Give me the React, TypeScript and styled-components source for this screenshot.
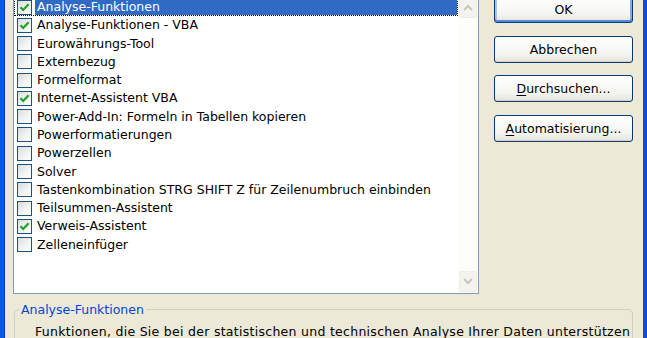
import React from 'react';
import styled, { createGlobalStyle } from 'styled-components';

const GlobalStyle = createGlobalStyle`
  html, body {
    margin: 0;
    padding: 0;
    background: #ece9d8;
  }
  body {
    font-family: "DejaVu Sans", Tahoma, sans-serif;
    font-size: 12.5px;
  }
`;

interface Item {
  label: string;
  checked: boolean;
}

const items: Item[] = [
  { label: 'Analyse-Funktionen', checked: true },
  { label: 'Analyse-Funktionen - VBA', checked: true },
  { label: 'Eurowährungs-Tool', checked: false },
  { label: 'Externbezug', checked: false },
  { label: 'Formelformat', checked: false },
  { label: 'Internet-Assistent VBA', checked: true },
  { label: 'Power-Add-In: Formeln in Tabellen kopieren', checked: false },
  { label: 'Powerformatierungen', checked: false },
  { label: 'Powerzellen', checked: false },
  { label: 'Solver', checked: false },
  { label: 'Tastenkombination STRG SHIFT Z für Zeilenumbruch einbinden', checked: false },
  { label: 'Teilsummen-Assistent', checked: false },
  { label: 'Verweis-Assistent', checked: true },
  { label: 'Zelleneinfüger', checked: false },
];

const Frame = styled.div`
  width: 647px;
  height: 338px;
  box-sizing: border-box;
  overflow: hidden;
  background: #ece9d8;
  border-left: 4px solid #0a56e8;
  border-right: 4px solid #0a4fd8;
  box-shadow: inset 1px 0 0 #0b3fc0;
`;

const Content = styled.div`
  margin-top: -5px;
  padding: 0 10px 0 9px;
  display: flex;
  flex-direction: column;
`;

const TopArea = styled.div`
  display: flex;
  gap: 15px;
`;

const ListBox = styled.div`
  width: 466px;
  height: 299px;
  box-sizing: border-box;
  border: 1px solid #7f9db9;
  background: #ffffff;
  display: flex;
`;

const Rows = styled.div`
  flex: 1;
  padding-top: 2px;
  display: flex;
  flex-direction: column;
`;

const Row = styled.div<{ $focused?: boolean }>`
  height: 18.28px;
  display: flex;
  align-items: center;
  padding: 0 1px 0 3px;
  box-sizing: border-box;
  outline: ${(p) => (p.$focused ? '1px dotted #000' : 'none')};
  outline-offset: -1px;
`;

const Box = styled.span`
  width: 15px;
  height: 15px;
  flex: none;
  box-sizing: border-box;
  border: 1px solid #1c5180;
  background: linear-gradient(135deg, #dcdcd7 0%, #f2f2ef 55%, #ffffff 100%);
  display: flex;
  align-items: center;
  justify-content: center;
`;

const Label = styled.span<{ $selected?: boolean }>`
  flex: 1;
  margin-left: 3px;
  padding: 0 2px;
  height: 16px;
  line-height: 16px;
  white-space: nowrap;
  color: ${(p) => (p.$selected ? '#ffffff' : '#000000')};
  background: ${(p) => (p.$selected ? '#316ac5' : 'transparent')};
`;

const ScrollBar = styled.div`
  width: 20px;
  flex: none;
  background: #fdfdfa;
  display: flex;
  flex-direction: column;
  justify-content: space-between;
  padding: 1px 0;
  box-sizing: border-box;
`;

const ScrollButton = styled.div`
  height: 19px;
  margin: 0 1px;
  border-radius: 2px;
  border: 1px solid #eeede5;
  background: #f4f3ee;
  display: flex;
  align-items: center;
  justify-content: center;
`;

const Buttons = styled.div`
  width: 139px;
  margin-top: 1px;
  display: flex;
  flex-direction: column;
  gap: 12.5px;
`;

const Button = styled.button<{ $default?: boolean }>`
  height: 27px;
  width: 100%;
  box-sizing: border-box;
  border: 1px solid #003c74;
  border-radius: 3px;
  background: linear-gradient(180deg, #ffffff 0%, #f4f4f0 70%, #e3e2da 100%);
  font-family: "DejaVu Sans", Tahoma, sans-serif;
  font-size: 12.5px;
  font-weight: 400;
  color: #000;
  padding: 0;
  box-shadow: ${(p) =>
    p.$default
      ? 'inset 0 -2px 0 #5a86e0, inset 2px 0 0 #a9c1f0, inset -2px 0 0 #89a9ec, inset 0 2px 0 #cfdcf7'
      : 'inset 0 -1px 0 #d6d0c5'};

  u {
    text-decoration: underline;
    text-underline-offset: 2px;
  }
`;

const Group = styled.fieldset`
  margin: 8px 0 0 1px;
  padding: 7px 20px 12px 20px;
  border: 1px solid #d0d0bf;
  border-radius: 5px;
  min-width: 0;
`;

const Legend = styled.legend`
  color: #0046d5;
  padding: 0 2px;
  margin-left: -16px;
  line-height: 15px;
`;

const Description = styled.div`
  white-space: nowrap;
  color: #000;
  line-height: 15px;
  letter-spacing: 0.28px;
`;

const Check = () => (
  <svg width="11" height="11" viewBox="0 0 11 11">
    <path d="M1.5 5.2 L4.2 8 L9.6 2.2" fill="none" stroke="#21a121" strokeWidth="2.2" />
  </svg>
);

const Chevron = ({ up }: { up?: boolean }) => (
  <svg width="10" height="7" viewBox="0 0 10 7">
    <path
      d={up ? 'M1 6 L5 2 L9 6' : 'M1 1 L5 5 L9 1'}
      fill="none"
      stroke="#c9c7ba"
      strokeWidth="2"
    />
  </svg>
);

export default function App() {
  return (
    <>
      <GlobalStyle />
      <Frame>
        <Content>
          <TopArea>
            <ListBox>
              <Rows>
                {items.map((item, i) => (
                  <Row key={item.label} $focused={i === 0}>
                    <Box>{item.checked && <Check />}</Box>
                    <Label $selected={i === 0}>{item.label}</Label>
                  </Row>
                ))}
              </Rows>
              <ScrollBar>
                <ScrollButton>
                  <Chevron up />
                </ScrollButton>
                <ScrollButton>
                  <Chevron />
                </ScrollButton>
              </ScrollBar>
            </ListBox>
            <Buttons>
              <Button $default>OK</Button>
              <Button>Abbrechen</Button>
              <Button>
                <u>D</u>urchsuchen...
              </Button>
              <Button>
                <u>A</u>utomatisierung...
              </Button>
            </Buttons>
          </TopArea>
          <Group>
            <Legend>Analyse-Funktionen</Legend>
            <Description>
              Funktionen, die Sie bei der statistischen und technischen Analyse Ihrer Daten unterstützen
            </Description>
          </Group>
        </Content>
      </Frame>
    </>
  );
}
